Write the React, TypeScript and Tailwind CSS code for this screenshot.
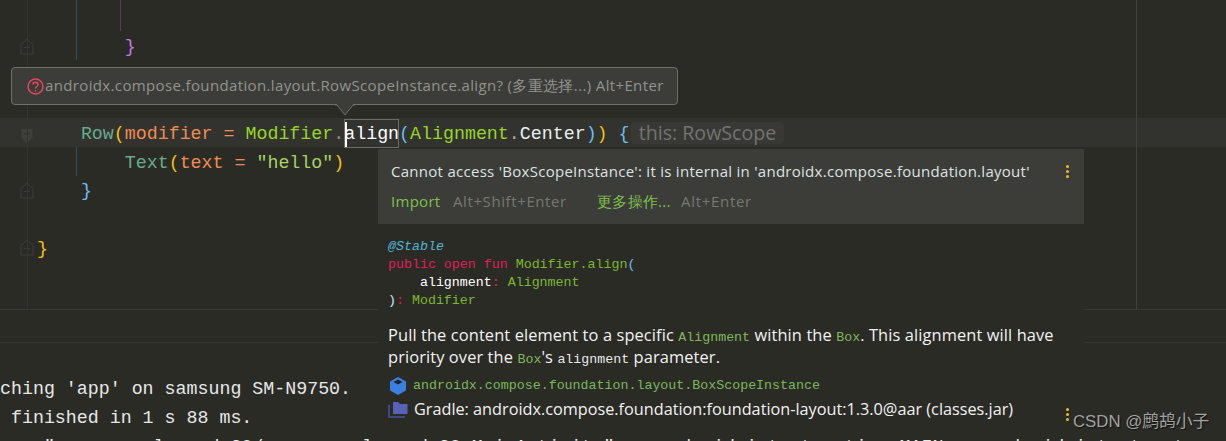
const mono = "font-['Liberation_Mono',monospace]";
const inlineCode = `${mono} text-[13.3px] leading-none tracking-normal text-[#7fb85c]`;

function FoldUp() {
  return (
    <svg width="14" height="17" viewBox="0 0 14 17" fill="none" stroke="#3d3e3a" className="ml-[20px]">
      <path d="M1 6.5 7 1l6 5.5v9.5H1z" />
      <path d="M4 9.5h6" />
    </svg>
  );
}

function FoldDown() {
  return (
    <svg width="12" height="14" viewBox="0 0 12 14" className="mt-[7px] ml-[21px]">
      <path d="M.5 0h11v9L6 14 .5 9z" fill="#3e3f3b" />
      <path d="M3 5h6" stroke="#2b2b26" />
    </svg>
  );
}

function Row({ fold, active, children }: { fold?: "up" | "down"; active?: boolean; children?: React.ReactNode }) {
  return (
    <div className={`flex h-[28.8px] items-center ${active ? "bg-[#32332e]" : ""}`}>
      <div className="flex w-[37px] shrink-0 items-center">
        {fold === "up" && <FoldUp />}
        {fold === "down" && <FoldDown />}
      </div>
      <div className={`${mono} pt-[4px] text-[18.3px] whitespace-pre`}>{children}</div>
    </div>
  );
}

function Dots() {
  return (
    <div className="flex flex-col gap-[2px]">
      <span className="size-[3px] rounded-full bg-[#e8bf2a]" />
      <span className="size-[3px] rounded-full bg-[#e8bf2a]" />
      <span className="size-[3px] rounded-full bg-[#e8bf2a]" />
    </div>
  );
}

export default function App() {
  return (
    <div className="relative h-[441px] w-[1226px] overflow-hidden bg-[#2b2b26] font-['Open_Sans',sans-serif]">
      {/* editor */}
      <div className="h-[310px] border-b border-[#383934] pt-[3px]">
        <Row />
        <Row fold="up">
          <span className="text-[#c774e8]">{"        }"}</span>
        </Row>
        <Row />
        <Row />
        <Row fold="down" active>
          <span className="text-[#67ab8c]">{"    Row"}</span>
          <span className="text-[#f2c20f]">(</span>
          <span className="text-[#f28b54]">modifier</span>
          <span className="text-[#f28b54]"> = </span>
          <span className="text-[#97d629]">Modifier</span>
          <span className="text-[#8a8f8a]">.</span>
          <span className="relative text-white">
            align
            <span className="absolute top-[-2px] left-0 h-[25px] w-[3px] bg-white" />
            <span className="absolute top-[-5px] left-0 h-[29px] w-[55px] border border-[#6b6c67]" />
          </span>
          <span className="text-[#6cbcf0]">(</span>
          <span className="text-[#97d629]">Alignment</span>
          <span className="text-[#a8b0a8]">.</span>
          <span className="text-[#e8f0f0]">Center</span>
          <span className="text-[#6cbcf0]">)</span>
          <span className="text-[#f2c20f]">)</span>
          <span className="text-[#6cbcf0]"> {"{"}</span>
        </Row>
        <Row>
          <span className="text-[#67ab8c]">{"        Text"}</span>
          <span className="text-[#f2c20f]">(</span>
          <span className="text-[#f28b54]">text = </span>
          <span className="text-[#a5d46a]">"hello"</span>
          <span className="text-[#f2c20f]">)</span>
        </Row>
        <Row fold="up">
          <span className="text-[#6cbcf0]">{"    }"}</span>
        </Row>
        <Row />
        <Row fold="up">
          <span className="text-[#f2c20f]">{"}"}</span>
        </Row>
      </div>

      {/* tool window header strip */}
      <div className="h-[33px] border-b border-[#353630]" />

      {/* console */}
      <div className={`${mono} pt-[32px] text-[18.3px] leading-[28.8px] whitespace-pre text-[#e6e8e6]`}>
        <div>ching 'app' on samsung SM-N9750.</div>
        <div> finished in 1 s 88 ms.</div>
        <div>{'    "com.example.medo20/com.example.medo20.MainActivity" -a android.intent.action.MAIN -c android.intent.category.LAUNCHER'}</div>
      </div>

      {/* guides */}
      <div className="absolute top-0 left-[27px] h-[309px] w-px bg-[#33342f]" />
      <div className="absolute top-0 left-[76px] h-[60px] w-px bg-[#34505f]" />
      <div className="absolute top-[147px] left-[76px] h-[29px] w-px bg-[#34505f]" />
      <div className="absolute top-0 left-[120px] h-[31px] w-px bg-[#573a5f]" />
      <div className="absolute top-0 left-[1136px] h-[309px] w-px bg-[#41423d]" />

      {/* inlay hint */}
      <div className="absolute top-[122px] left-[631px] flex h-[22px] w-[153px] items-center justify-center rounded-[4px] bg-[#383934] text-[19.6px] text-[#73746f]">
        this: RowScope
      </div>

      {/* error tooltip */}
      <div className="absolute top-[67px] left-[11px] flex h-[38px] w-[667px] items-center rounded-[4px] border border-[#6f706b] bg-[#3c3d38] pl-[15px] text-[15px] tracking-[0.36px] text-[#92938e]">
        <svg width="17" height="17" viewBox="0 0 17 17" fill="none" className="mr-[1px] shrink-0">
          <circle cx="8.5" cy="8.5" r="7.5" stroke="#e5465f" strokeWidth="1.5" />
          <path d="M6 6.6c0-3.2 5-3.2 5 0 0 2-2.5 1.8-2.5 3.8M8.500 12v1.400" stroke="#e5465f" strokeWidth="1.5" />
        </svg>
        <span className="-translate-y-px whitespace-nowrap">androidx.compose.foundation.layout.RowScopeInstance.align? (多重选择...) Alt+Enter</span>
      </div>
      <svg width="20" height="13" viewBox="0 0 20 13" className="absolute top-[104px] left-[335px]">
        <path d="M0 1h2L10 11 18 1h2" fill="#3c3d38" stroke="#6f706b" />
        <path d="M2 0h16v1H2z" fill="#3c3d38" />
      </svg>

      {/* quick doc popup */}
      <div className="absolute top-[148px] left-[378px] h-[284px] w-[706px] bg-[#2b2b26]">
        <div className="h-[76px] border-t border-[#2a2b26] bg-[#3c3d38] pt-[11px] pr-[15px] pl-[13px]">
          <div className="flex items-center justify-between">
            <span className="text-[15px] tracking-[0.28px] whitespace-nowrap text-[#dde2e2]">
              Cannot access 'BoxScopeInstance': it is internal in 'androidx.compose.foundation.layout'
            </span>
            <Dots />
          </div>
          <div className="mt-[7px] flex text-[15px] tracking-[0.28px] whitespace-nowrap">
            <span className="w-[62px] text-[#7fc04f]">Import</span>
            <span className="w-[144px] tracking-[0.6px] text-[#777873]">Alt+Shift+Enter</span>
            <span className="w-[84px] text-[#7fc04f]">更多操作...</span>
            <span className="tracking-[0.7px] text-[#777873]">Alt+Enter</span>
          </div>
        </div>

        <div className={`${mono} pt-[14px] pl-[10px] text-[13.3px] leading-[18px] whitespace-pre`}>
          <div className="text-[#4fb8d8] italic">@Stable</div>
          <div>
            <span className="text-[#e01e5a]">public open fun </span>
            <span className="text-[#7cb82e]">Modifier.align</span>
            <span className="text-[#6cbcf0]">(</span>
          </div>
          <div>
            <span className="text-white">{"    alignment"}</span>
            <span className="text-[#e01e5a]">: </span>
            <span className="text-[#7cb82e]">Alignment</span>
          </div>
          <div>
            <span className="text-[#cfe6f0]">)</span>
            <span className="text-[#e01e5a]">: </span>
            <span className="text-[#7cb82e]">Modifier</span>
          </div>
        </div>

        <p className="mt-[14px] w-[690px] pl-[10px] text-[16.4px] leading-[22px] tracking-[0.11px] text-[#f2f2f2]">
          Pull the content element to a specific <code className={inlineCode}>Alignment</code> within the <code className={inlineCode}>Box</code>. This alignment will have priority over the <code className={inlineCode}>Box</code>'s <code className={`${mono} text-[13.3px] leading-none tracking-normal text-[#e8e8e8]`}>alignment</code> parameter.
        </p>

        <div className="mt-[7px] flex h-[22px] items-center pl-[12px]">
          <svg width="16" height="18" viewBox="0 0 16 18" className="shrink-0">
            <path d="M8 0l8 4.500v9L8 18l-8-4.500v-9z" fill="#3d7fe0" />
            <path d="M8 2.500l4.500 2.500L8 7.500 3.500 5z" fill="#20242a" />
          </svg>
          <span className={`${mono} ml-[7px] text-[13.3px] whitespace-nowrap text-[#7ab85c]`}>
            androidx.compose.foundation.layout.BoxScopeInstance
          </span>
        </div>

        <div className="flex h-[24px] items-center pl-[10px]">
          <svg width="20" height="17" viewBox="0 0 20 17" className="shrink-0">
            <path d="M5 1h5l2 2h7.500v10H5z" fill="#5763b8" />
            <path d="M1 4v12h16" fill="none" stroke="#4a5499" strokeWidth="1.500" />
          </svg>
          <span className="ml-[6px] text-[16.24px] whitespace-nowrap text-[#f2f2f2]">
            Gradle: androidx.compose.foundation:foundation-layout:1.3.0@aar (classes.jar)
          </span>
        </div>
      </div>

      {/* second dots + watermark */}
      <div className="absolute top-[408px] left-[1066px]">
        <Dots />
      </div>
      <div className="absolute top-[409px] left-[1073px] font-['Liberation_Sans','Noto_Sans_CJK_SC',sans-serif] text-[16.8px] whitespace-nowrap text-[#a3a3a0] [text-shadow:1px_1px_1px_#111]">
        CSDN @鹧鸪小子
      </div>
    </div>
  );
}
